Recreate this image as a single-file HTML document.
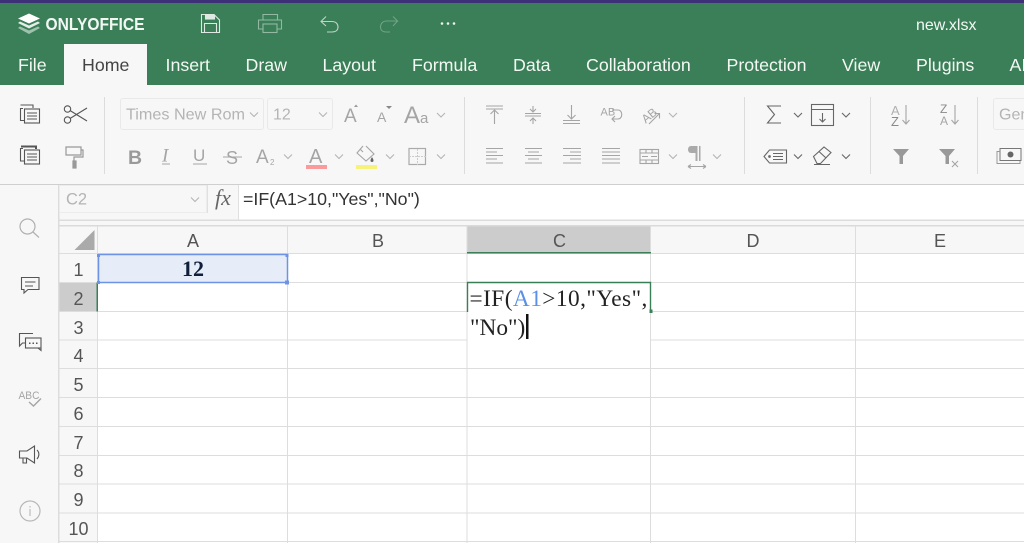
<!DOCTYPE html>
<html><head><meta charset="utf-8"><style>
html,body{margin:0;padding:0;width:1024px;height:543px;overflow:hidden;background:#fff}
svg{display:block;position:absolute;left:0;top:0;filter:blur(0.3px)}
text{font-family:"Liberation Sans",sans-serif}
.t{font-size:17.8px;fill:#f4f8f5}
.i{fill:none;stroke:#555;stroke-width:1.1}
.g{fill:none;stroke:#a5a5a5;stroke-width:1.1}
.ch{fill:none;stroke:#b4b4b4;stroke-width:1.1}
.chd{fill:none;stroke:#666;stroke-width:1.1}
.hl{font-size:18px;fill:#555;text-anchor:middle}
.f{font-family:"Liberation Serif",serif;font-size:23.3px;fill:#222}
</style></head><body>
<svg width="1024" height="543" viewBox="0 0 1024 543">
<rect width="1024" height="543" fill="#fff"/>
<rect width="1024" height="3" fill="#3d2f78"/>
<rect y="3" width="1024" height="82" fill="#3a7f57"/>
<rect x="64" y="44" width="83" height="41" fill="#f7f7f7"/>
<rect y="85" width="1024" height="99" fill="#f7f7f7"/>
<rect y="184" width="1024" height="1.500" fill="#cfcfcf"/>

<!-- logo -->
<path d="M29 13.500L40 18.500L29 23.500L18 18.500Z" fill="#fff"/>
<path d="M20 21.500L18 23L29 28.500L40 23L38 21.500L29 25.500Z" fill="#e3eee8"/>
<path d="M20 26.500L18 28L29 34L40 28L38 26.500L29 30.500Z" fill="#9fc2ae"/>
<text x="45.500" y="30" font-size="17.500" font-weight="700" fill="#f2f7f4" textLength="99" lengthAdjust="spacingAndGlyphs">ONLYOFFICE</text>

<!-- title icons -->
<g fill="none" stroke="#dfe9e3" stroke-width="1.100">
<path d="M201.500 14.500H214L219.500 20V32.500H201.500Z"/><path d="M204.500 32V23.500H216.500V32"/><rect x="205.500" y="15" width="9" height="4" fill="#dfe9e3"/>
</g>
<g fill="none" stroke="#93b9a3" stroke-width="1.100">
<path d="M263 20V14.500H277.500V20"/><path d="M263 29H258.500V20H281.500V29H277"/><rect x="263" y="24" width="14" height="8.500"/>
<path d="M326 16.500L321 21.500L326 26M321 21.500H332C336 21.500 338 24 338 27C338 30 336 32 332 32H327" stroke="#bfd4c8"/>
<path d="M393 16.500L397.500 21H386.500C382.500 21 380.500 24 380.500 27C380.500 30 382.500 32 386 32H390M393 26L397.500 21" stroke="#6fa386"/>
</g>
<g fill="#eef4f0"><circle cx="442" cy="23.500" r="1.300"/><circle cx="448" cy="23.500" r="1.300"/><circle cx="454" cy="23.500" r="1.300"/></g>
<text x="916" y="30" font-size="16" fill="#f4f8f5">new.xlsx</text>

<!-- tabs -->
<text class="t" x="18" y="71">File</text>
<text class="t" x="82" y="71" style="fill:#444">Home</text>
<text class="t" x="165.500" y="71">Insert</text>
<text class="t" x="245.500" y="71">Draw</text>
<text class="t" x="322.500" y="71">Layout</text>
<text class="t" x="412" y="71">Formula</text>
<text class="t" x="513" y="71">Data</text>
<text class="t" x="586" y="71">Collaboration</text>
<text class="t" x="726.500" y="71">Protection</text>
<text class="t" x="842" y="71">View</text>
<text class="t" x="916" y="71">Plugins</text>
<text class="t" x="1009.500" y="71">AI</text>

<!-- separators -->
<g fill="#dcdcdc">
<rect x="104" y="97" width="1" height="77"/><rect x="464" y="97" width="1" height="77"/><rect x="744" y="97" width="1" height="77"/><rect x="870" y="97" width="1" height="77"/><rect x="977" y="97" width="1" height="77"/>
</g>

<!-- clipboard -->
<g class="i">
<path d="M23 108.500H20.500V120.500H24M20.500 105H33V108"/><rect x="24.500" y="109" width="15" height="14"/><path d="M27 113H37M27 116H37M27 119H37"/>
<path d="M23 148.500H20.500V161H24"/><path d="M21 146.500H36V149" stroke-width="2"/><rect x="24.500" y="150" width="15" height="14"/><path d="M27 154H37M27 157H37M27 160H37"/>
<circle cx="67.500" cy="109" r="3.200"/><circle cx="67.500" cy="120" r="3.200"/><path d="M70 110.500L87 121M70 118.500L87 108"/>
</g>
<g fill="none" stroke="#999" stroke-width="1.200">
<path d="M66 147H81V155H66Z"/><path d="M81 150H83V157H74V161"/><rect x="73" y="161" width="3" height="7" fill="#999"/>
</g>

<!-- font controls -->
<rect x="120.500" y="98.500" width="143" height="31" rx="2.500" fill="#f7f7f7" stroke="#e9e9e9"/>
<rect x="267.500" y="98.500" width="65" height="31" rx="2.500" fill="#f7f7f7" stroke="#e9e9e9"/>
<text x="126" y="119.500" font-size="16" fill="#b4b4b4" textLength="119" lengthAdjust="spacingAndGlyphs">Times New Rom</text>
<text x="273" y="119.500" font-size="16" fill="#b4b4b4">12</text>
<path class="ch" d="M250 112.500L254 116.500L258 112.500M319 112.500L323 116.500L327 112.500"/>
<text x="128" y="164" font-size="19.500" font-weight="700" fill="#9a9a9a">B</text>
<text x="162" y="161.500" font-size="19" font-style="italic" style="font-family:'Liberation Serif',serif" fill="#a5a5a5">I</text>
<rect x="162" y="163.500" width="8" height="1" fill="#a5a5a5"/>
<text x="193" y="161" font-size="17" fill="#a5a5a5">U</text><rect x="193" y="163.500" width="14" height="1" fill="#a5a5a5"/>
<text x="226" y="164" font-size="18" fill="#a5a5a5">S</text><rect x="223" y="156.500" width="19" height="1" fill="#a5a5a5"/>
<text x="256" y="163" font-size="19" fill="#a5a5a5">A</text><text x="270" y="165" font-size="8" fill="#a5a5a5">2</text>
<text x="309" y="163" font-size="20" fill="#a5a5a5">A</text><rect x="306" y="165" width="21" height="4" fill="#fb9a9a"/>
<path class="ch" d="M284 154.500L288 158.500L292 154.500M335 154.500L339 158.500L343 154.500"/>
<text x="344" y="122" font-size="19" fill="#a5a5a5">A</text><path d="M354 107L356 104.500L358 107Z" fill="#999"/>
<text x="377" y="122" font-size="14" fill="#a5a5a5">A</text><path d="M386 106H392L389 109Z" fill="#888"/>
<text x="404" y="123" font-size="24" fill="#a5a5a5">A</text><text x="420" y="123" font-size="15" fill="#a5a5a5">a</text>
<path class="ch" d="M437 113L441 117L445 113"/>
<!-- fill -->
<path class="g" d="M363 146L357 153L366 161L374 154L366 146M360 149L363 152"/>
<path d="M372 157C370 160 370 162 372 162C374 162 374 160 372 157Z" fill="#666"/>
<rect x="356" y="165" width="21" height="4" fill="#f6f27a"/>
<path class="ch" d="M386 154.500L390 158.500L394 154.500M437 154.500L441 158.500L445 154.500"/>
<rect x="409" y="148.500" width="16.500" height="16" fill="none" stroke="#aaa" stroke-width="1.200"/>
<path d="M417.500 149V165M409 156.500H426" stroke="#ccc" stroke-dasharray="2 1" fill="none"/>

<!-- align -->
<g class="g">
<path d="M486 106H503M486 109H503M494.500 124V110M490.500 114L494.500 110L498.500 114"/>
<path d="M525 113.500H541M525 116H541M533 106V112M530 109L533 112L536 109M533 124V118M530 121L533 118L536 121"/>
<path d="M563 120.500H580M563 123.500H580M571.500 105V119M567.500 115L571.500 119L575.500 115"/>
<path d="M612 110H618C623 110 623 119 618 119H612M615 116L612 119L615 122"/>
<path d="M649 124L659 114M654.500 113.500H659.500V118.500"/>
</g>
<text x="600.500" y="115.500" font-size="11" fill="#a5a5a5">AB</text>
<text x="640" y="120" font-size="12" fill="#a5a5a5" transform="rotate(-40 648 114)">AB</text>
<path class="ch" d="M669 113L673 117L677 113M669 154.500L673 158.500L677 154.500M713 154.500L717 158.500L721 154.500"/>
<g class="g">
<path d="M486 148.500H503M486 152H497M486 155.500H503M486 159H497M486 163H503"/>
<path d="M525 148.500H542M528 152H539M525 155.500H542M528 159H539M525 163H542"/>
<path d="M563 148.500H581M570 152H581M563 155.500H581M570 159H581M563 163H581"/>
<path d="M602 148.500H620M602 152H620M602 155.500H620M602 159H620M602 163H620"/>
<rect x="640" y="149.500" width="18.500" height="14"/><path d="M640 153H658M640 160H658M646 149.500V153M652 149.500V153M646 160V164M652 160V164M642 156.500H648M651 156.500H657"/>
<path d="M688 166.500H706M688 166.500L691 164.500M688 166.500L691 168.500M706 166.500L703 164.500M706 166.500L703 168.500"/>
</g>
<path d="M696 146H691C687 146 687 153 691 153H696V146Z" fill="#aaa"/><rect x="695.500" y="146" width="2" height="15" fill="#aaa"/><rect x="699" y="146" width="1.500" height="15" fill="#aaa"/>

<!-- sum etc -->
<g class="i" style="stroke:#666">
<path d="M781 106H767.500L774.500 114.500L767.500 123H781"/>
<rect x="811.500" y="104.500" width="22" height="21"/><path d="M811.500 109.500H833.500M822.500 113V122M819.500 119L822.500 122L825.500 119"/>
<path d="M764 156.500L769.500 150H786.500V163H769.500Z"/><circle cx="769.500" cy="156.500" r="0.800" fill="#666"/><path d="M773 153.500H783M773 156.500H783M773 159.500H783"/>
<path d="M813.500 156.500L824 147L831 152.500L820.500 163.500H817ZM819 151.500L826 158M814 164.500H830"/>
</g>
<path class="chd" d="M794 113L798 117L802 113M842 113L846 117L850 113M794 154.500L798 158.500L802 154.500M842 154.500L846 158.500L850 154.500"/>

<!-- sort -->
<text x="891" y="115" font-size="13" fill="#b0b0b0">A</text><text x="891" y="126" font-size="13" fill="#8a8a8a">Z</text>
<path class="g" d="M906 105V124M902.500 120L906 124L909.500 120"/>
<text x="940" y="113" font-size="12" fill="#8a8a8a">Z</text><text x="940" y="125" font-size="12" fill="#a5a5a5">A</text>
<path class="g" d="M955 105V124M951.500 120L955 124L958.500 120"/>
<path d="M893 149H909L903 156V164H899.500V156Z" fill="#999"/>
<path d="M939 149H955L949 156V164H945.500V156Z" fill="#999"/>
<path class="g" d="M952 161L958 167M958 161L952 167"/>

<rect x="993.500" y="98.500" width="40" height="31" rx="2.500" fill="#f7f7f7" stroke="#e9e9e9"/>
<text x="999" y="119.500" font-size="16" fill="#b4b4b4">Gen</text>
<rect x="1000" y="148.500" width="21" height="12" fill="#f7f7f7" stroke="#777"/><circle cx="1010.500" cy="154.500" r="3" fill="#666"/>
<path d="M1000 151.500H997V163.500H1020V161" fill="none" stroke="#999"/>

<!-- left rail -->
<rect y="185" width="59" height="358" fill="#f7f7f7"/>
<rect x="58" y="185" width="1.500" height="358" fill="#dcdcdc"/>
<g fill="none" stroke="#b0b0b0" stroke-width="1.200"><circle cx="27.500" cy="226.500" r="7.500"/><path d="M33 232L39 237.500"/></g>
<g class="i" style="stroke:#555">
<path d="M21.500 277.500H39V289.500H28L24 293V289.500H21.500Z"/><path d="M25 282H35.500M25 286H33"/>
<path d="M33 333.500H19.500V346L22.500 343H25"/><rect x="25.500" y="338" width="15.500" height="10"/><path d="M41 348V350.500L38 348"/>
</g>
<g fill="#555"><rect x="29" y="342.500" width="1.500" height="1.500"/><rect x="32.500" y="342.500" width="1.500" height="1.500"/><rect x="36" y="342.500" width="1.500" height="1.500"/></g>
<text x="18.500" y="399" font-size="11" fill="#a5a5a5" textLength="21" lengthAdjust="spacingAndGlyphs">ABC</text>
<path d="M29 402L33.500 406L41 398.500" fill="none" stroke="#a5a5a5" stroke-width="1.400"/>
<g class="i" style="stroke:#555"><path d="M19.500 451H27L34.500 446V463L27 458H19.500ZM23 458V463H26.500V458M37 450C39.500 452.500 39.500 456 37 459"/></g>
<circle cx="30" cy="511" r="10" fill="none" stroke="#b8b8b8" stroke-width="1.200"/>
<rect x="29.500" y="506" width="1" height="1.500" fill="#b0b0b0"/><rect x="29.500" y="509" width="1" height="7" fill="#b0b0b0"/>

<!-- formula bar -->
<rect x="59.500" y="185" width="965" height="35" fill="#f7f7f7"/>
<rect x="59.500" y="185.500" width="147" height="27" fill="#f7f7f7" stroke="#ececec"/>
<text x="66" y="204.500" font-size="16.500" fill="#b4b4b4">C2</text>
<path class="ch" d="M191 197.500L195 201.500L199 197.500"/>
<rect x="207" y="185" width="1" height="28" fill="#e0e0e0"/>
<text x="215" y="205" font-size="22" font-style="italic" style="font-family:'Liberation Serif',serif" fill="#666">fx</text>
<rect x="238" y="185" width="786" height="35" fill="#fff"/>
<rect x="238" y="185" width="1" height="35" fill="#e0e0e0"/>
<text x="243" y="205" font-size="17.800" fill="#333">=IF(A1&gt;10,"Yes","No")</text>
<rect x="59" y="219.500" width="965" height="1.500" fill="#dcdcdc"/>
<rect x="59.500" y="221" width="965" height="4" fill="#f7f7f7"/>
<rect x="59.500" y="225" width="965" height="1.500" fill="#dadada"/>

<!-- headers -->
<rect x="59.500" y="226.500" width="965" height="27.500" fill="#f7f7f7"/>
<rect x="59.500" y="254" width="38" height="289" fill="#f7f7f7"/>
<path d="M74.500 250L94.500 230V250Z" fill="#aaa"/>
<rect x="467" y="226.500" width="183" height="26.500" fill="#cccccc"/>
<rect x="59.500" y="282.500" width="37.500" height="29" fill="#cccccc"/>

<!-- grid -->
<g fill="#dddddd">
<rect x="97" y="226" width="1" height="317"/><rect x="287" y="226" width="1" height="317"/><rect x="466.500" y="226" width="1" height="317"/><rect x="650" y="226" width="1" height="317"/><rect x="855" y="226" width="1" height="317"/>
<rect x="59" y="253" width="965" height="1"/><rect x="59" y="282" width="965" height="1"/><rect x="59" y="311" width="965" height="1"/><rect x="59" y="339.500" width="965" height="1"/><rect x="59" y="368" width="965" height="1"/><rect x="59" y="397" width="965" height="1"/><rect x="59" y="426" width="965" height="1"/><rect x="59" y="455" width="965" height="1"/><rect x="59" y="483.500" width="965" height="1"/><rect x="59" y="512.500" width="965" height="1"/><rect x="59" y="541" width="965" height="1"/>
</g>
<rect x="467" y="252" width="184" height="1.500" fill="#3a7f57"/>
<rect x="96.500" y="282.500" width="1.500" height="29" fill="#3a7f57"/>

<text class="hl" x="193" y="247">A</text><text class="hl" x="378" y="247">B</text><text class="hl" x="559.500" y="247">C</text><text class="hl" x="753" y="247">D</text><text class="hl" x="940" y="247">E</text>
<text class="hl" x="78.500" y="276">1</text><text class="hl" x="78.500" y="305">2</text><text class="hl" x="78.500" y="334">3</text><text class="hl" x="78.500" y="362">4</text><text class="hl" x="78.500" y="391">5</text><text class="hl" x="78.500" y="420">6</text><text class="hl" x="78.500" y="449">7</text><text class="hl" x="78.500" y="477">8</text><text class="hl" x="78.500" y="506">9</text><text class="hl" x="78.500" y="535">10</text>

<!-- selection A1 -->
<rect x="98.500" y="254.500" width="189" height="28" fill="#e6edf9" stroke="#6d93e6" stroke-width="1.500"/>
<rect x="97" y="254" width="3" height="3" fill="#6d93e6"/><rect x="285.500" y="254" width="3" height="3" fill="#6d93e6"/><rect x="97" y="281" width="3" height="3" fill="#6d93e6"/><rect x="285" y="280.500" width="4" height="4" fill="#6d93e6"/>
<text x="193" y="276" font-size="22" font-weight="700" style="font-family:'Liberation Serif',serif" fill="#10203a" text-anchor="middle">12</text>

<!-- editor C2 -->
<rect x="467.500" y="283" width="182.500" height="58" fill="#fff"/>
<path d="M467.500 312V282.500H650.500V312" fill="none" stroke="#3a7f57" stroke-width="1.400"/>
<rect x="649.500" y="309.500" width="3" height="3.500" fill="#3a7f57"/>
<text class="f" x="469.500" y="306" style="letter-spacing:.45px">=IF(<tspan fill="#5b8fe8">A1</tspan>&gt;10,"Yes",</text>
<text class="f" x="470" y="335">"No")</text>
<rect x="526" y="314" width="2.500" height="25" fill="#111"/>
</svg>
</body></html>
